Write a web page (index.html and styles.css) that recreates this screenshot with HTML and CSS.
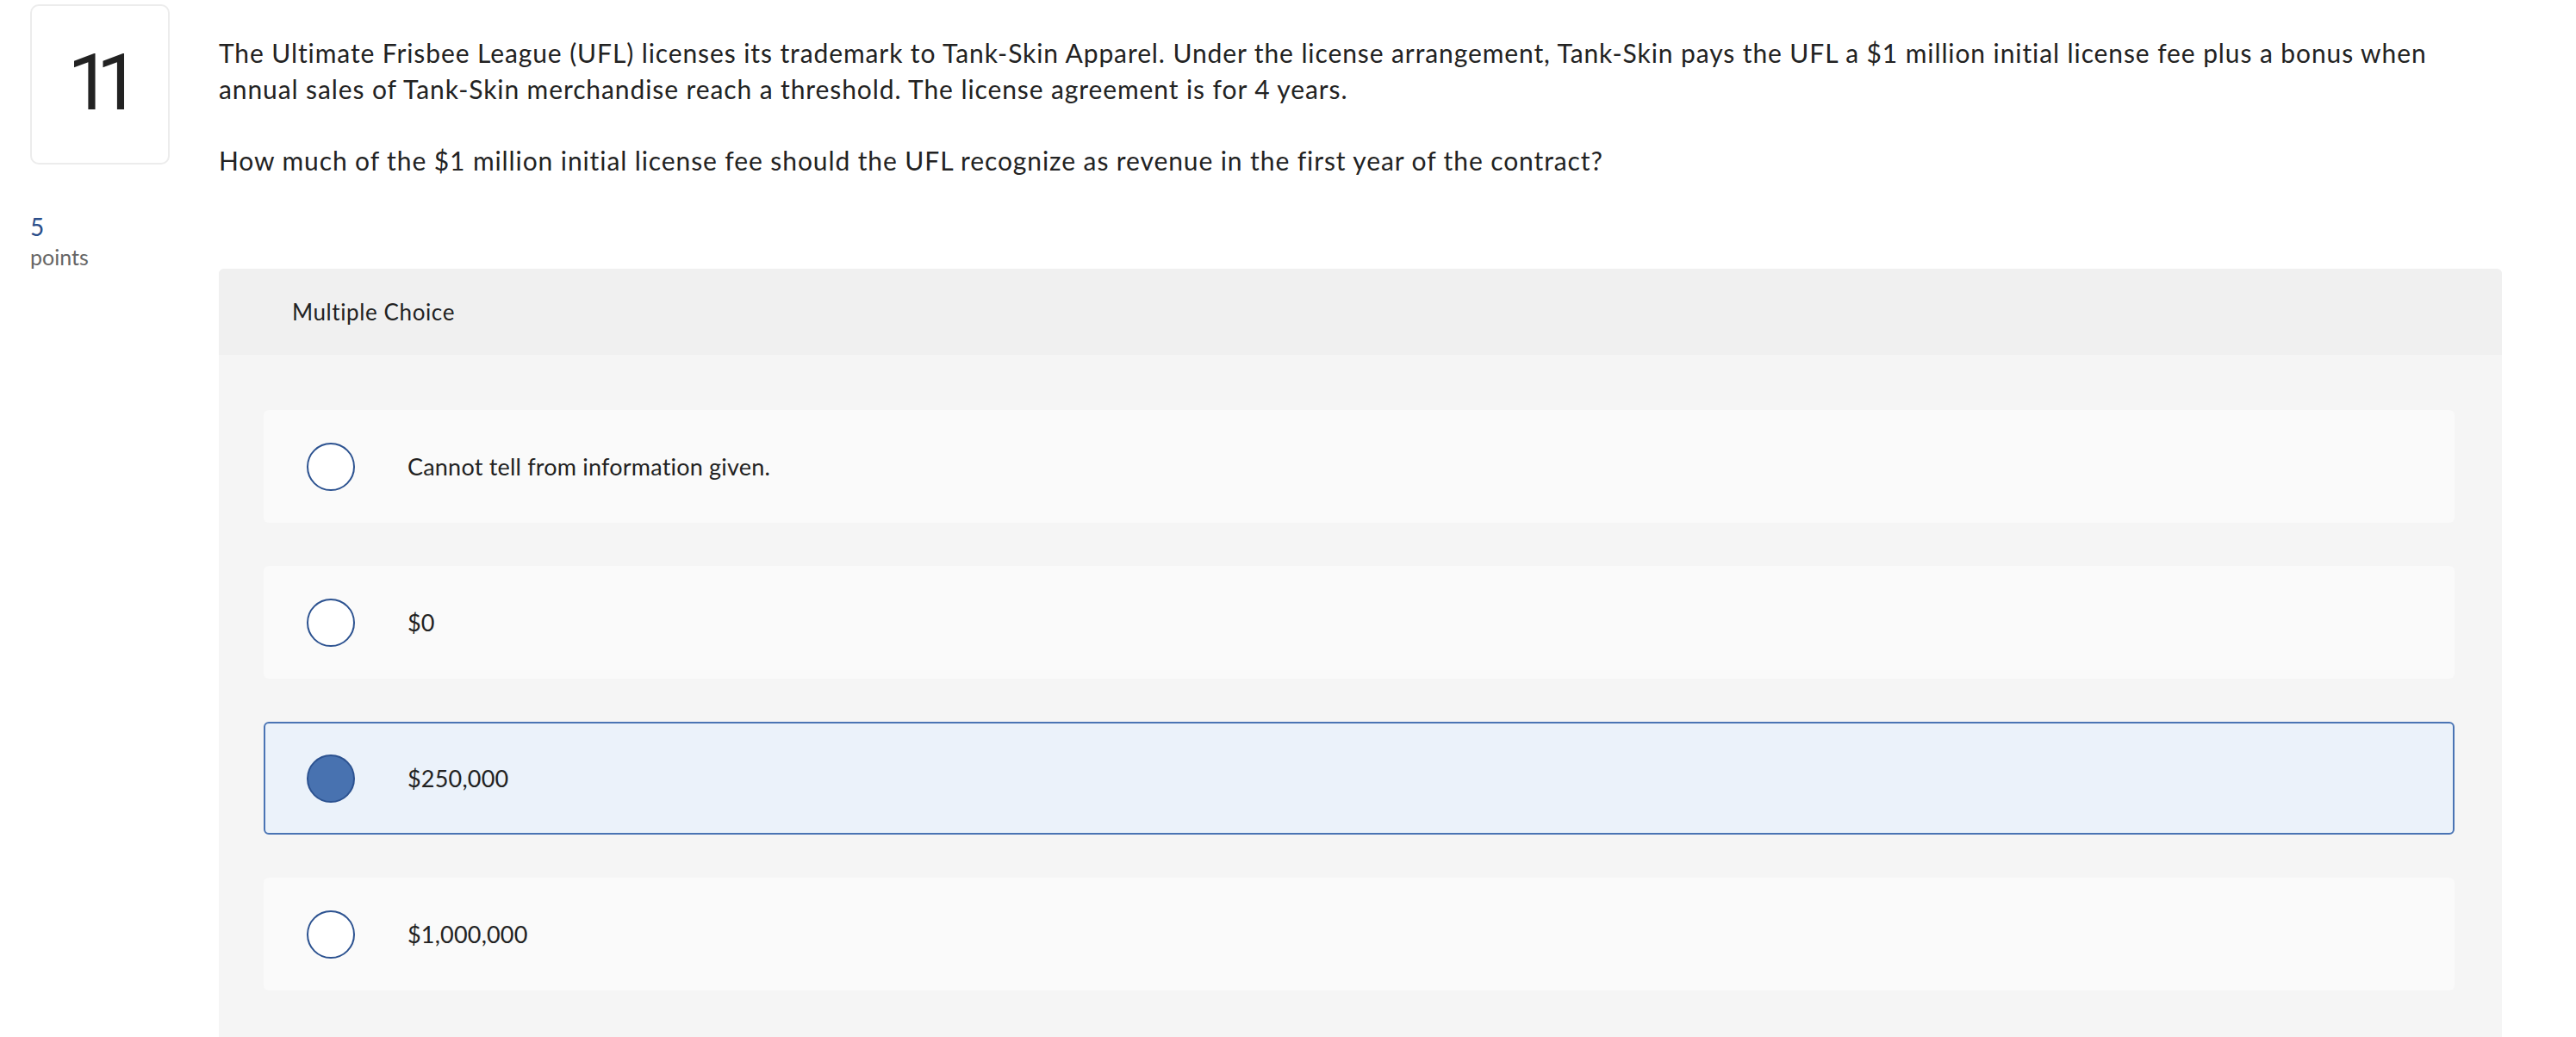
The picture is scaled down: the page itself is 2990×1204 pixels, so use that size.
FILE: index.html
```html
<!DOCTYPE html>
<html lang="en">
<head>
<meta charset="utf-8">
<title>Question 11</title>
<link rel="stylesheet" href="styles.css">
</head>
<body>
<div class="question">
  <aside class="meta">
    <div class="qnum"><span class="qnum-text">11</span></div>
    <div class="points">
      <span class="pts-val">5</span>
      <span class="pts-label">points</span>
    </div>
  </aside>
  <main class="content">
    <div class="prompt">
      <p>The Ultimate Frisbee League (UFL) licenses its trademark to Tank-Skin Apparel. Under the license arrangement, Tank-Skin pays the UFL a $1 million initial license fee plus a bonus when annual sales of Tank-Skin merchandise reach a threshold. The license agreement is for 4 years.</p>
      <p>How much of the $1 million initial license fee should the UFL recognize as revenue in the first year of the contract?</p>
    </div>
    <section class="mc">
      <header class="mc-head">Multiple Choice</header>
      <div class="mc-body">
        <label class="choice"><span class="radio"></span><span class="choice-text">Cannot tell from information given.</span></label>
        <label class="choice"><span class="radio"></span><span class="choice-text">$0</span></label>
        <label class="choice selected"><span class="radio"></span><span class="choice-text">$250,000</span></label>
        <label class="choice"><span class="radio"></span><span class="choice-text">$1,000,000</span></label>
      </div>
    </section>
  </main>
</div>
</body>
</html>
```
FILE: styles.css
```css
html, body {
  margin: 0;
  padding: 0;
  background: #ffffff;
}
body {
  font-family: Lato, "Open Sans", "Liberation Sans", sans-serif;
  color: #222222;
}
.question {
  display: flex;
  align-items: flex-start;
  padding: 5px 0 0 35px;
}
.meta {
  width: 162px;
  flex: none;
}
.qnum {
  box-sizing: border-box;
  width: 162px;
  height: 186px;
  border: 2px solid #ececec;
  border-radius: 10px;
  display: flex;
  align-items: center;
  justify-content: center;
  font-family: Roboto, "Open Sans", sans-serif;
  font-size: 90px;
  color: #222222;
  padding: 0 8px 4px 0;
}
.qnum-text {
  letter-spacing: -17px;
}
.points {
  margin-top: 55px;
  display: flex;
  flex-direction: column;
}
.pts-val {
  font-size: 28px;
  line-height: 34px;
  color: #2a4e8a;
}
.pts-label {
  margin-top: 3px;
  font-size: 25px;
  line-height: 30px;
  color: #666666;
}
.content {
  margin-left: 57px;
  width: 2650px;
  flex: none;
  padding-top: 35px;
}
.prompt {
  max-width: 2600px;
}
.prompt p {
  margin: 0 0 41px 0;
  font-size: 30px;
  line-height: 42px;
  letter-spacing: 0.9px;
}
.prompt p:last-child {
  margin-bottom: 0;
}
.mc {
  margin-top: 105px;
  border-radius: 6px 6px 0 0;
  overflow: hidden;
  background: #f5f5f5;
}
.mc-head {
  height: 100px;
  background: #f0f0f0;
  display: flex;
  align-items: center;
  padding-left: 85px;
  font-size: 26px;
  letter-spacing: 0.6px;
}
.mc-body {
  display: flex;
  flex-direction: column;
  gap: 50px;
  padding: 64px 55px 80px 52px;
}
.choice {
  box-sizing: border-box;
  height: 131px;
  border-radius: 6px;
  background: #fafafa;
  display: flex;
  align-items: center;
  padding-left: 50px;
  border: 2px solid transparent;
}
.choice.selected {
  background: #ebf2fa;
  border-color: #4a74b4;
}
.radio {
  box-sizing: border-box;
  width: 56px;
  height: 56px;
  border-radius: 50%;
  border: 2px solid #2c5290;
  background: #ffffff;
  flex: none;
  margin-left: -2px;
}
.choice.selected .radio {
  background: #4872b0;
}
.choice-text {
  margin-left: 61px;
  font-size: 27px;
  letter-spacing: 0.2px;
}
```
